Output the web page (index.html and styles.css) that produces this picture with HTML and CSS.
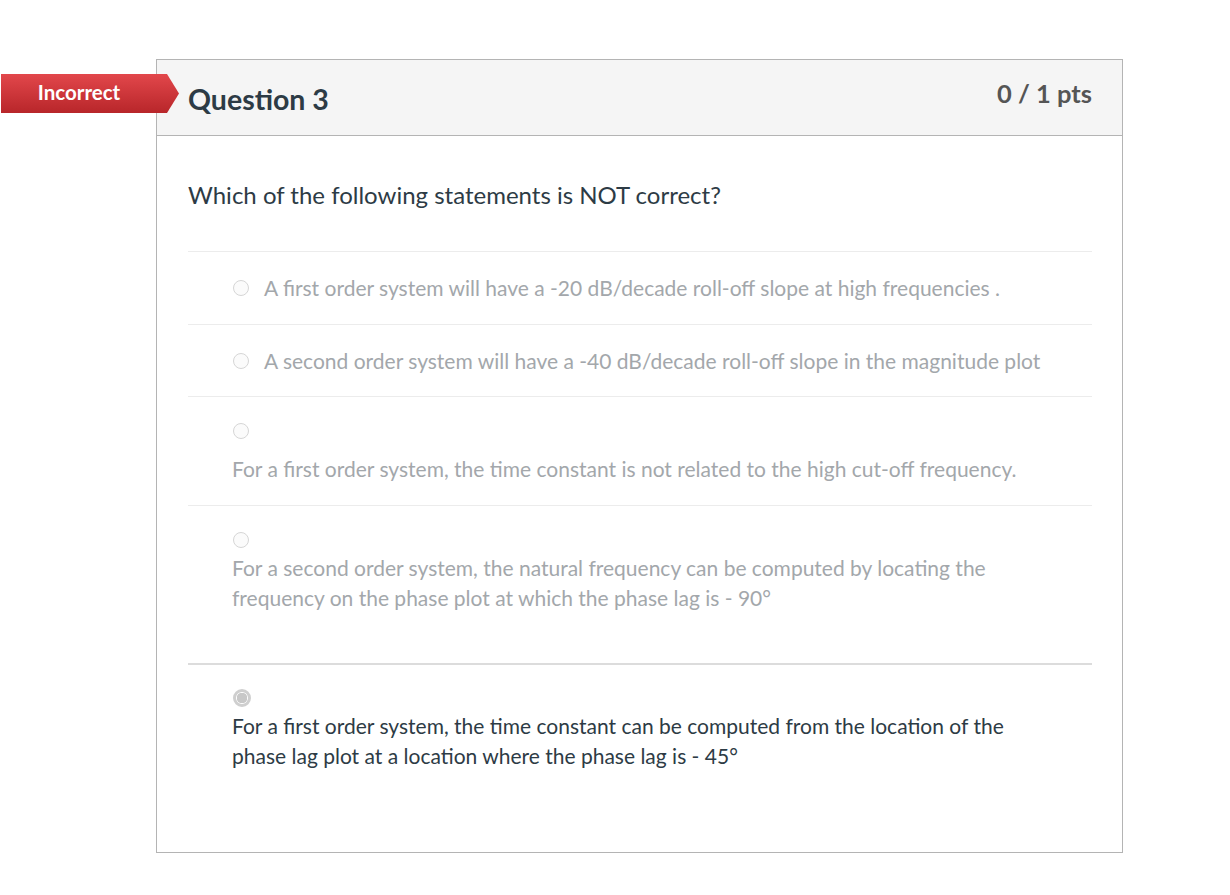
FILE: index.html
```html
<!DOCTYPE html>
<html>
<head>
<meta charset="utf-8">
<link rel="stylesheet" href="styles.css">
</head>
<body>
<div class="page">
  <div class="card">
    <div class="badge"><span>Incorrect</span></div>
    <div class="card-header">
      <h2 class="title">Question 3</h2>
      <div class="pts">0 / 1 pts</div>
    </div>
    <div class="card-body">
      <p class="question">Which of the following statements is NOT correct?</p>
      <div class="answers">
        <div class="answer inline">
          <span class="radio"></span>
          <span class="ans-text">A first order system will have a -20 dB/decade roll-off slope at high frequencies .</span>
        </div>
        <div class="answer inline short">
          <span class="radio"></span>
          <span class="ans-text">A second order system will have a -40 dB/decade roll-off slope in the magnitude plot</span>
        </div>
        <div class="answer stacked">
          <div class="radio-row"><span class="radio"></span></div>
          <div class="ans-text spaced">For a first order system, the time constant is not related to the high cut-off frequency.</div>
        </div>
        <div class="answer stacked trailing">
          <div class="radio-row"><span class="radio"></span></div>
          <div class="ans-text">For a second order system, the natural frequency can be computed by locating the<br>frequency on the phase plot at which the phase lag is - 90°</div>
        </div>
        <div class="answer stacked selected">
          <div class="radio-row"><span class="radio checked"></span></div>
          <div class="ans-text">For a first order system, the time constant can be computed from the location of the<br>phase lag plot at a location where the phase lag is - 45°</div>
        </div>
      </div>
    </div>
  </div>
</div>
</body>
</html>
```

FILE: styles.css
```css
html, body {
  margin: 0;
  padding: 0;
  background: #fff;
}
body {
  font-family: Lato, "Open Sans", sans-serif;
  color: #2d3b45;
}
.page {
  padding: 59px 0 0 156px;
}
.card {
  position: relative;
  width: 965px;
  height: 792px;
  border: 1px solid #b4b4b4;
}
.badge {
  position: absolute;
  left: -156px;
  top: 14px;
  width: 178px;
  height: 39px;
  background: linear-gradient(#e2474b, #b8262a);
  clip-path: polygon(0 0, 166px 0, 178px 50%, 166px 100%, 0 100%);
  display: flex;
  align-items: center;
}
.badge span {
  width: 156px;
  text-align: center;
  color: #fff;
  font-weight: 700;
  font-size: 20.5px;
  padding-bottom: 3px;
}
.card-header {
  background: #f5f5f5;
  height: 75px;
  border-bottom: 1px solid #b4b4b4;
  display: flex;
  justify-content: space-between;
  align-items: flex-start;
  padding: 0 30px 0 31px;
}
.title {
  margin: 22px 0 0;
  font-size: 28.5px;
  font-weight: 700;
  line-height: 34px;
  color: #2d3b45;
}
.pts {
  margin-top: 18px;
  font-size: 25.5px;
  font-weight: 700;
  line-height: 30px;
  color: #555;
}
.card-body {
  padding: 0 30px 0 31px;
}
.question {
  margin: 42px 0 40px;
  font-size: 24px;
  line-height: 33px;
}
.answer {
  border-top: 1px solid #ececec;
  padding: 21px 0 21px 45px;
  font-size: 21px;
  line-height: 30px;
  color: #a3a7ab;
}
.answer.short {
  padding-bottom: 20px;
}
.answer.inline {
  display: flex;
  align-items: center;
}
.answer.inline .radio {
  margin-right: 15px;
}
.answer.stacked {
  padding-left: 44px;
}
.radio-row {
  height: 26px;
  display: flex;
  align-items: center;
}
.radio {
  display: inline-block;
  width: 14px;
  height: 14px;
  border: 1px solid #d6d6d6;
  border-radius: 50%;
  background: #fbfbfb;
  flex: none;
}
.radio.checked {
  width: 12px;
  height: 12px;
  border: 3px solid #cfcfcf;
  background: radial-gradient(circle, #c8c8c8 0 5px, #fff 5.5px);
}
.radio-row .radio {
  margin-left: 1px;
}
.spaced {
  margin-top: 10px;
}
.trailing {
  padding-bottom: 50px;
}
.selected {
  border-top: 2px solid #dcdcdc;
  padding-top: 20px;
  color: #2d3b45;
}
```
